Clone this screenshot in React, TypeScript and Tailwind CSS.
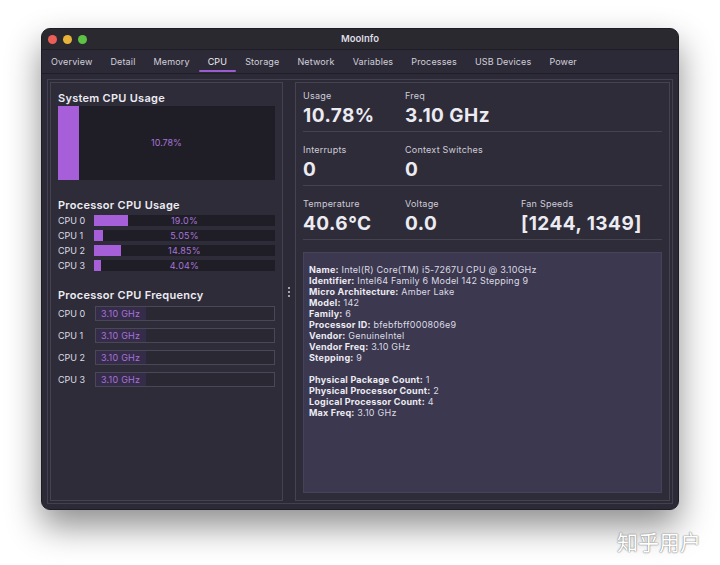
import React from 'react';

const TABS = ['Overview', 'Detail', 'Memory', 'CPU', 'Storage', 'Network', 'Variables', 'Processes', 'USB Devices', 'Power'];

const CORES = [
  { name: 'CPU 0', usage: 19.0, label: '19.0%' },
  { name: 'CPU 1', usage: 5.05, label: '5.05%' },
  { name: 'CPU 2', usage: 14.85, label: '14.85%' },
  { name: 'CPU 3', usage: 4.04, label: '4.04%' },
];

const INFO: [string, string][] = [
  ['Name', 'Intel(R) Core(TM) i5-7267U CPU @ 3.10GHz'],
  ['Identifier', 'Intel64 Family 6 Model 142 Stepping 9'],
  ['Micro Architecture', 'Amber Lake'],
  ['Model', '142'],
  ['Family', '6'],
  ['Processor ID', 'bfebfbff000806e9'],
  ['Vendor', 'GenuineIntel'],
  ['Vendor Freq', '3.10 GHz'],
  ['Stepping', '9'],
];

const COUNTS: [string, string][] = [
  ['Physical Package Count', '1'],
  ['Physical Processor Count', '2'],
  ['Logical Processor Count', '4'],
  ['Max Freq', '3.10 GHz'],
];

function Metric({ label, value, w }: { label: string; value: string; w: string }) {
  return (
    <div className={`${w} flex flex-col`}>
      <span className="text-[9px] leading-[12px] text-[#cfcdd8] tracking-wide">{label}</span>
      <span className="mt-[4px] text-[19px] leading-[20px] font-bold text-[#ecebf2] tracking-wide">{value}</span>
    </div>
  );
}

export default function App() {
  return (
    <div
      className="relative w-[720px] h-[565px] bg-white overflow-hidden"
      style={{ fontFamily: 'Inter, "Noto Sans", sans-serif' }}
    >
      <div className="ml-[41px] mt-[28px] w-[638px] h-[482px] rounded-[9px] bg-[#2c2a37] flex flex-col overflow-hidden shadow-[0_16px_34px_rgba(0,0,0,0.45)] border border-[#1e1d24]">
        {/* title bar */}
        <div className="h-[20px] shrink-0 bg-[#2a2930] flex items-center px-[6px]">
          <div className="flex gap-[6px] w-[60px]">
            <span className="w-[9px] h-[9px] rounded-full bg-[#ec5f57]" />
            <span className="w-[9px] h-[9px] rounded-full bg-[#e8b339]" />
            <span className="w-[9px] h-[9px] rounded-full bg-[#5ec244]" />
          </div>
          <div className="flex-1 text-center text-[9.5px] font-semibold text-[#dddce2]">MooInfo</div>
          <div className="w-[60px]" />
        </div>

        {/* tabs */}
        <div className="h-[25px] shrink-0 flex items-stretch border-t border-b border-[#1f1e26] bg-[#2c2a36]">
          {TABS.map(t => (
            <div
              key={t}
              className={`relative px-[9px] flex items-center text-[9px] tracking-[0.15px] ${t === 'CPU' ? 'text-[#ecebf2]' : 'text-[#d2d0da]'}`}
            >
              {t}
              {t === 'CPU' && <span className="absolute left-0 right-0 bottom-[1px] h-[2.5px] rounded-full bg-[#9b5ccf]" />}
            </div>
          ))}
        </div>

        {/* content */}
        <div className="flex-1 min-h-0 p-[5px]">
          <div className="h-full border border-[#43414f] p-[2px] flex">
            {/* left panel */}
            <div className="w-[233px] shrink-0 border border-[#45434f] bg-[#2e2c39] px-[7px] pt-[8px] flex flex-col">
              <div className="text-[11px] font-semibold text-[#ecebf2] tracking-wide leading-[14px]">System CPU Usage</div>
              <div className="mt-[1px] h-[74px] bg-[#1f1e26] relative flex items-center justify-center">
                <div className="absolute left-0 top-0 bottom-0 w-[21px] bg-[#a65fd9]" />
                <span className="relative text-[9px] text-[#a774d6]">10.78%</span>
              </div>

              <div className="mt-[18px] text-[11px] font-semibold text-[#ecebf2] tracking-wide leading-[14px]">Processor CPU Usage</div>
              <div className="mt-[3px] flex flex-col gap-[4px]">
                {CORES.map(c => (
                  <div key={c.name} className="flex items-center h-[11px]">
                    <span className="w-[36px] text-[9px] text-[#dddce4]">{c.name}</span>
                    <div className="flex-1 h-[11px] bg-[#1f1e26] relative flex items-center justify-center">
                      <div className="absolute left-0 top-0 bottom-0 bg-[#a65fd9]" style={{ width: `${c.usage}%` }} />
                      <span className="relative text-[9px] text-[#a774d6] tracking-wide">{c.label}</span>
                    </div>
                  </div>
                ))}
              </div>

              <div className="mt-[17px] text-[11px] font-semibold text-[#ecebf2] tracking-wide leading-[14px]">Processor CPU Frequency</div>
              <div className="mt-[4px] flex flex-col gap-[7px]">
                {CORES.map(c => (
                  <div key={c.name} className="flex items-center h-[15px]">
                    <span className="w-[37px] text-[9px] text-[#dddce4]">{c.name}</span>
                    <div className="flex-1 h-[15px] border border-[#4a4857] bg-[#2a2833] relative flex items-center">
                      <div className="absolute left-0 top-0 bottom-0 w-[50px] bg-[#352c4a]" />
                      <span className="relative pl-[5px] text-[9px] text-[#a774d6] tracking-wide">3.10 GHz</span>
                    </div>
                  </div>
                ))}
              </div>
            </div>

            {/* divider */}
            <div className="w-[12px] shrink-0 flex flex-col items-center justify-center gap-[2px]">
              <span className="w-[2px] h-[2px] rounded-full bg-[#cfcdd8]" />
              <span className="w-[2px] h-[2px] rounded-full bg-[#cfcdd8]" />
              <span className="w-[2px] h-[2px] rounded-full bg-[#cfcdd8]" />
            </div>

            {/* right panel */}
            <div className="flex-1 min-w-0 border border-[#45434f] bg-[#2e2c39] px-[7px] pt-[7px] pb-[7px] flex flex-col">
              <div className="flex pb-[5px] border-b border-[#45434f]">
                <Metric label="Usage" value="10.78%" w="w-[102px]" />
                <Metric label="Freq" value="3.10 GHz" w="w-[116px]" />
              </div>
              <div className="flex pt-[12px] pb-[5px] border-b border-[#45434f]">
                <Metric label="Interrupts" value="0" w="w-[102px]" />
                <Metric label="Context Switches" value="0" w="w-[116px]" />
              </div>
              <div className="flex pt-[12px] pb-[5px] border-b border-[#45434f]">
                <Metric label="Temperature" value="40.6°C" w="w-[102px]" />
                <Metric label="Voltage" value="0.0" w="w-[116px]" />
                <Metric label="Fan Speeds" value="[1244, 1349]" w="flex-1" />
              </div>
              <div className="mt-[12px] flex-1 bg-[#3b384f] border border-[#45425a] px-[5px] pt-[11px] text-[9px] leading-[11px] text-[#dcdbe4] tracking-wide">
                {INFO.map(([k, v]) => (
                  <div key={k}>
                    <span className="font-bold text-[#ecebf2]">{k}:</span> {v}
                  </div>
                ))}
                <div className="h-[11px]" />
                {COUNTS.map(([k, v]) => (
                  <div key={k}>
                    <span className="font-bold text-[#ecebf2]">{k}:</span> {v}
                  </div>
                ))}
              </div>
            </div>
          </div>
        </div>
      </div>

      <div
        className="absolute right-[19px] top-[526px] text-[21px] text-white [text-shadow:0_0_1px_#666,0_0_2px_#999]"
        style={{ fontFamily: '"Noto Sans CJK SC", sans-serif' }}
      >
        知乎用户
      </div>
    </div>
  );
}
